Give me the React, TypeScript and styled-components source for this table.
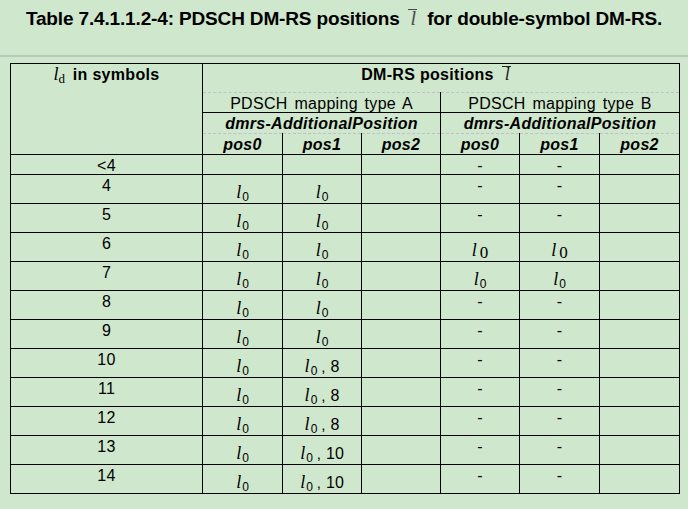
import React from 'react';
import styled, { createGlobalStyle } from 'styled-components';

const GlobalStyle = createGlobalStyle`
  html, body {
    margin: 0;
    padding: 0;
    background: #cfe7cc;
  }
`;

const Page = styled.div`
  width: 688px;
  height: 509px;
  background: #cfe7cc;
  font-family: 'Liberation Sans', Arial, sans-serif;
  color: #000;
  overflow: hidden;
`;

const TitleBar = styled.div`
  height: 57px;
  border-bottom: 2px solid #b9cbb6;
  display: flex;
  justify-content: center;
  padding-top: 8px;
  box-sizing: border-box;
`;

const Title = styled.h1`
  margin: 0;
  font-family: 'Liberation Sans', Arial, sans-serif;
  font-size: 19px;
  font-weight: 700;
  letter-spacing: -0.15px;
  line-height: 22px;
  white-space: nowrap;
`;

const Body = styled.div`
  padding: 6px 0 0 10px;
`;

const Table = styled.table`
  border-collapse: collapse;
  table-layout: fixed;
  width: 669px;
  font-family: 'Liberation Sans', Arial, sans-serif;
  font-size: 16px;
  color: #000;
`;

const Cell = styled.td<{ $bottom?: 'dash'; $top?: 'dash' }>`
  border: 1px solid #000;
  ${p => p.$bottom === 'dash' && 'border-bottom: 1px dashed #c4bccb;'}
  ${p => p.$top === 'dash' && 'border-top: 1px dashed #c4bccb;'}
  padding: 2px 0 0 0;
  text-align: center;
  vertical-align: top;
  line-height: 17px;
  font-family: 'Liberation Sans', Arial, sans-serif;
  font-size: 16px;
  letter-spacing: 0.3px;
  word-spacing: 2px;
  white-space: nowrap;
  overflow: hidden;
  box-sizing: border-box;
`;

const HeadText = styled.span<{ $italic?: boolean }>`
  font-weight: ${p => (p.$italic ? 700 : 400)};
  font-style: ${p => (p.$italic ? 'italic' : 'normal')};
`;

const BoldHead = styled.span`
  font-weight: 700;
  word-spacing: 0;
`;

const Row = styled.tr<{ $h: number }>`
  height: ${p => p.$h}px;
`;

const MathL = styled.span`
  font-family: 'Liberation Serif', 'Times New Roman', serif;
  font-style: italic;
  font-size: 18px;
  line-height: 17px;
  letter-spacing: 0;
`;

const Sub = styled.span<{ $big?: boolean }>`
  font-family: ${p => (p.$big ? "'Liberation Serif', serif" : "'Liberation Sans', Arial, sans-serif")};
  font-size: ${p => (p.$big ? '17px' : '12px')};
  line-height: 0;
  vertical-align: ${p => (p.$big ? '-2px' : '-3px')};
  letter-spacing: 0;
  margin-left: ${p => (p.$big ? '3px' : '1px')};
`;

const SubD = styled.span`
  font-family: 'Liberation Serif', serif;
  font-size: 13px;
  line-height: 0;
  vertical-align: -3px;
  letter-spacing: 0;
  margin-right: 1px;
`;

const L0Wrap = styled.span`
  display: inline-block;
  padding-top: 7px;
  line-height: 17px;
  letter-spacing: 0;
  word-spacing: 0;
`;

const Comma = styled.span`
  font-size: 15px;
  margin: 0 5px 0 4px;
`;

const Bar = styled.span<{ $title?: boolean }>`
  display: inline-block;
  font-family: 'Liberation Serif', 'Times New Roman', serif;
  font-style: italic;
  font-weight: 400;
  font-size: ${p => (p.$title ? '20px' : '18px')};
  line-height: ${p => (p.$title ? '16px' : '14px')};
  color: ${p => (p.$title ? '#4a4a4a' : '#222')};
  border-top: 1px solid ${p => (p.$title ? '#4a4a4a' : '#222')};
  padding: 0 1px 0 3px;
  margin: 0 10px 0 8px;
  letter-spacing: 0;
`;

const L0 = ({ extra, big }: { extra?: string; big?: boolean }) => (
  <L0Wrap>
    <MathL>l</MathL>
    <Sub $big={big}>0</Sub>
    {extra && (
      <>
        <Comma>,</Comma>
        {extra}
      </>
    )}
  </L0Wrap>
);

type Val = string | null;

// [ld, A pos0, A pos1, B pos0, B pos1]
const rows: [string, Val, Val, Val, Val][] = [
  ['<4', null, null, '-', '-'],
  ['4', 'l0', 'l0', '-', '-'],
  ['5', 'l0', 'l0', '-', '-'],
  ['6', 'l0', 'l0', 'L0', 'L0'],
  ['7', 'l0', 'l0', 'l0', 'l0'],
  ['8', 'l0', 'l0', '-', '-'],
  ['9', 'l0', 'l0', '-', '-'],
  ['10', 'l0', 'l0,8', '-', '-'],
  ['11', 'l0', 'l0,8', '-', '-'],
  ['12', 'l0', 'l0,8', '-', '-'],
  ['13', 'l0', 'l0,10', '-', '-'],
  ['14', 'l0', 'l0,10', '-', '-'],
];

const renderVal = (v: Val) => {
  if (v === null) return null;
  if (v === '-') return v;
  if (v === 'L0') return <L0 big />;
  const [, extra] = v.split(',');
  return <L0 extra={extra} />;
};

export default function App() {
  return (
    <Page>
      <GlobalStyle />
      <TitleBar>
        <Title>
          Table 7.4.1.1.2-4: PDSCH DM-RS positions<Bar $title>l</Bar>for double-symbol DM-RS.
        </Title>
      </TitleBar>
      <Body>
        <Table>
          <colgroup>
            <col style={{ width: 192 }} />
            <col style={{ width: 80 }} />
            <col style={{ width: 79 }} />
            <col style={{ width: 79 }} />
            <col style={{ width: 79 }} />
            <col style={{ width: 80 }} />
            <col style={{ width: 80 }} />
          </colgroup>
          <tbody>
            <Row $h={29}>
              <Cell rowSpan={4}>
                <MathL>l</MathL>
                <SubD>d</SubD> <BoldHead>in symbols</BoldHead>
              </Cell>
              <Cell colSpan={6} $bottom="dash">
                <BoldHead>DM-RS positions</BoldHead>
                <Bar>l</Bar>
              </Cell>
            </Row>
            <Row $h={20}>
              <Cell colSpan={3} $top="dash">
                <HeadText>PDSCH mapping type A</HeadText>
              </Cell>
              <Cell colSpan={3} $top="dash">
                <HeadText>PDSCH mapping type B</HeadText>
              </Cell>
            </Row>
            <Row $h={21}>
              <Cell colSpan={3} $bottom="dash">
                <HeadText $italic>dmrs-AdditionalPosition</HeadText>
              </Cell>
              <Cell colSpan={3} $bottom="dash">
                <HeadText $italic>dmrs-AdditionalPosition</HeadText>
              </Cell>
            </Row>
            <Row $h={21}>
              {['pos0', 'pos1', 'pos2', 'pos0', 'pos1', 'pos2'].map((p, i) => (
                <Cell key={i} $top="dash">
                  <HeadText $italic>{p}</HeadText>
                </Cell>
              ))}
            </Row>
            {rows.map(([ld, a0, a1, b0, b1], i) => (
              <Row key={ld} $h={i === 0 ? 19 : 29}>
                <Cell>{ld}</Cell>
                <Cell>{renderVal(a0)}</Cell>
                <Cell>{renderVal(a1)}</Cell>
                <Cell />
                <Cell>{renderVal(b0)}</Cell>
                <Cell>{renderVal(b1)}</Cell>
                <Cell />
              </Row>
            ))}
          </tbody>
        </Table>
      </Body>
    </Page>
  );
}
